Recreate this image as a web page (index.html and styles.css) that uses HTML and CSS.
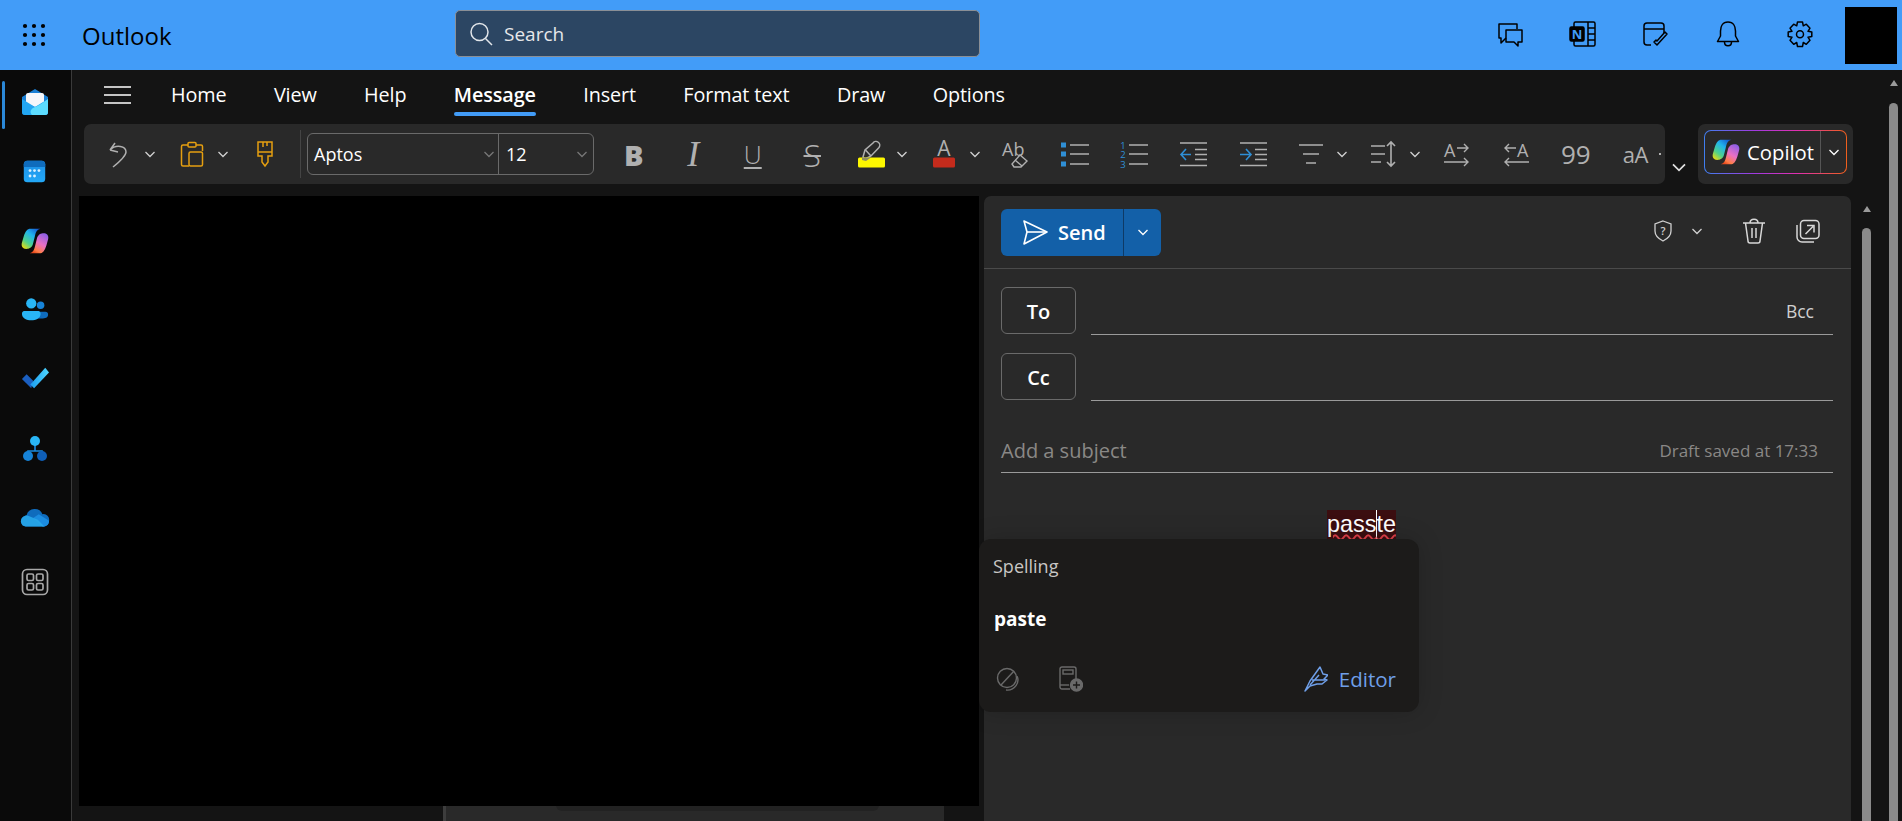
FILE: index.html
```html
<!DOCTYPE html>
<html lang="en">
<head>
<meta charset="utf-8">
<title>Outlook</title>
<link rel="stylesheet" href="styles.css">
</head>
<body>
<svg class="defs" width="0" height="0" aria-hidden="true">
  <defs>
    <linearGradient id="gCyan" x1="0" y1="0" x2="1" y2="0"><stop offset="0" stop-color="#1c9cf0"/><stop offset="1" stop-color="#4fd8ff"/></linearGradient>
    <linearGradient id="gCalendar" x1="0" y1="0" x2="0" y2="1"><stop offset="0" stop-color="#1d8fe6"/><stop offset="1" stop-color="#23a8f7"/></linearGradient>
    <linearGradient id="gCoA" x1="0.85" y1="0" x2="0.1" y2="1"><stop offset="0" stop-color="#1458d0"/><stop offset="0.35" stop-color="#20b4ec"/><stop offset="0.7" stop-color="#4fd28a"/><stop offset="1" stop-color="#f5dc0a"/></linearGradient>
    <linearGradient id="gCoB" x1="0.8" y1="0" x2="0.25" y2="1"><stop offset="0" stop-color="#8a5ee6"/><stop offset="0.5" stop-color="#ea70c4"/><stop offset="0.85" stop-color="#ff7d45"/><stop offset="1" stop-color="#e8481c"/></linearGradient>
    <symbol id="chev" viewBox="0 0 12 12"><polyline points="1.500,4 6,8.500 10.500,4" fill="none" stroke="currentColor" stroke-width="1.300"/></symbol>
    <symbol id="copilot" viewBox="0 0 32 32">
      <path fill="url(#gCoA)" d="M11 2H22C18 3 17 6 16 10L14 18C13 24 9 25 6 25C2 25 0 22 1 18L3 11C5 5 7 2 11 2Z"/>
      <path fill="url(#gCoB)" d="M21 30H10C14 29 15 26 16 22L18 14C19 8 23 7 26 7C30 7 32 10 31 14L29 21C27 27 25 30 21 30Z"/>
    </symbol>
  </defs>
</svg>
<div class="app">
  <header class="topbar">
    <svg class="waffle" width="24" height="24" viewBox="0 0 24 24" fill="#000"><circle cx="3" cy="3" r="2.100"/><circle cx="12" cy="3" r="2.100"/><circle cx="21" cy="3" r="2.100"/><circle cx="3" cy="12" r="2.100"/><circle cx="12" cy="12" r="2.100"/><circle cx="21" cy="12" r="2.100"/><circle cx="3" cy="21" r="2.100"/><circle cx="12" cy="21" r="2.100"/><circle cx="21" cy="21" r="2.100"/></svg>
    <div class="brand">Outlook</div>
    <div class="search">
      <svg width="26" height="26" viewBox="0 0 26 26" fill="none" stroke="#e2e6ea" stroke-width="1.500"><circle cx="11.500" cy="11" r="8.500"/><path d="M17.500 17.500L24 24"/></svg>
      <span>Search</span>
    </div>
    <div class="top-actions">
      <svg class="top-ic" viewBox="0 0 28 28" fill="none" stroke="#000" stroke-width="1.500" stroke-linejoin="round"><path d="M21 9V4H3V18H5V23L10 18"/><path d="M10 10H26V22H22V26L18 22H10Z"/></svg>
      <svg class="top-ic" viewBox="0 0 28 28" fill="none" stroke="#000" stroke-width="1.500"><rect x="5" y="2" width="21" height="24" rx="1.500"/><path d="M19 2V26M19 8H26M19 14H26M19 20H26"/><rect x="1" y="7" width="14" height="14" rx="1.500" fill="#000"/><text class="onenote" x="8" y="18.500" text-anchor="middle">N</text></svg>
      <svg class="top-ic" viewBox="0 0 28 28" fill="none" stroke="#000" stroke-width="1.500" stroke-linejoin="round"><path d="M10 25H6A3 3 0 0 1 3 22V6A3 3 0 0 1 6 3H20A3 3 0 0 1 23 6V13"/><path d="M3 9H23"/><path d="M13 22L16 25L26 14L24 12L16 21L15 20Z"/></svg>
      <svg class="top-ic" viewBox="0 0 28 28" fill="none" stroke="#000" stroke-width="1.500" stroke-linejoin="round"><path d="M14 2C8.500 2 6.500 6.500 6.500 11V16L3.500 21.500H24.500L21.500 16V11C21.500 6.500 19.500 2 14 2Z"/><path d="M10.500 22C10.500 27 17.500 27 17.500 22"/></svg>
      <svg class="top-ic" viewBox="0 0 28 28" fill="none" stroke="#000" stroke-width="1.500" stroke-linejoin="round"><path d="M11.500 2H16.500L17.300 5.800L20.300 4.200L24 8.200L22 11.300L25.800 12V16.500L22 17.200L24 20.300L20.300 24.300L17.300 22.500L16.500 26.500H11.500L10.700 22.500L7.700 24.300L4 20.300L6 17.200L2.200 16.500V12L6 11.300L4 8.200L7.700 4.200L10.700 5.800Z"/><circle cx="14" cy="14.200" r="3.500"/></svg>
    </div>
    <div class="avatar"></div>
  </header>

  <div class="body">
    <nav class="rail">
      <div class="rail-item rail-active">
        <svg class="rail-ic" viewBox="0 0 28 28"><path fill="#1a7fd4" d="M14 1L27 9V24A3 3 0 0 1 24 27H4A3 3 0 0 1 1 24V9Z"/><path fill="#f4f6fa" d="M5 7A2 2 0 0 1 7 5H21A2 2 0 0 1 23 7V15L14 19L5 15Z"/><path fill="#22a6f2" d="M1 11L14 19L27 11V24A3 3 0 0 1 24 27H4A3 3 0 0 1 1 24Z"/><path fill="#5cdcff" d="M27 11V24A3 3 0 0 1 24 27H11C9 25 9 22 12 20C17 18 22 15 27 11Z"/></svg>
      </div>
      <div class="rail-item">
        <svg class="rail-ic cal" viewBox="0 0 28 28"><rect x="2" y="2" width="24" height="24" rx="4" fill="url(#gCalendar)"/><path fill="#0f6cbd" d="M2 9V6A4 4 0 0 1 6 2H22A4 4 0 0 1 26 6V9Z"/><g fill="#d8f0ff"><circle cx="9" cy="13" r="1.600"/><circle cx="14" cy="13" r="1.600"/><circle cx="19" cy="13" r="1.600"/><circle cx="9" cy="19" r="1.600"/><circle cx="14" cy="19" r="1.600"/></g></svg>
      </div>
      <div class="rail-item"><svg class="rail-ic"><use href="#copilot"/></svg></div>
      <div class="rail-item">
        <svg class="rail-ic" viewBox="0 0 30 28"><circle cx="21" cy="9" r="4" fill="#1683d8"/><path fill="#0f6cbd" d="M16 16H26A3 3 0 0 1 29 19C29 22 26 23 22 23H14Z"/><circle cx="11" cy="7" r="5.500" fill="#29b6f6"/><path fill="#29b6f6" d="M3 15H19A3 3 0 0 1 21 18C21 23 16 25 11 25C6 25 1 23 1 18A3 3 0 0 1 3 15Z"/></svg>
      </div>
      <div class="rail-item">
        <svg class="rail-ic lift" viewBox="0 0 30 28"><path fill="#1b5fc0" d="M1 15L6 10L13 17L11 25Z"/><path fill="url(#gCyan)" d="M10 21L26 3L30 8L14 25Z"/></svg>
      </div>
      <div class="rail-item">
        <svg class="rail-ic" viewBox="0 0 28 28"><path d="M14 10V16M7 20V16H21V20" fill="none" stroke="#1a8ae0" stroke-width="1.600"/><circle cx="14" cy="6" r="5" fill="#29b6f6"/><circle cx="7" cy="21" r="5" fill="#1683d8"/><circle cx="21" cy="21" r="5" fill="#0f5fb8"/></svg>
      </div>
      <div class="rail-item">
        <svg class="rail-ic wide lift" viewBox="0 0 32 22"><path fill="#0f6cbd" d="M7 9A9 9 0 0 1 24 8A6 6 0 0 1 31 15C31 19 28 21 26 21H6C3 21 1 18.500 1 15.500C1 12 4 9.500 7 9Z"/><path fill="#1b8ce0" d="M14 12L20 8L31 15C31 19 28 21 26 21H10L24 21Z"/><path fill="#28a8ea" d="M3 20C1.500 18 1 17 1 15.500C1 12 4 9.500 8 9.500L19 14L26 21H6Z" opacity=".9"/></svg>
      </div>
      <div class="rail-item">
        <svg class="rail-ic" viewBox="0 0 28 28" fill="none" stroke="#a8a8a8" stroke-width="1.700"><rect x="1.500" y="1.500" width="25" height="25" rx="4.500"/><rect x="6" y="6" width="6.500" height="6.500" rx="1.500"/><rect x="15.500" y="6" width="6.500" height="6.500" rx="1.500"/><rect x="6" y="15.500" width="6.500" height="6.500" rx="1.500"/><rect x="15.500" y="15.500" width="6.500" height="6.500" rx="1.500"/></svg>
      </div>
    </nav>

    <main class="main">
      <div class="tabs">
        <svg class="menu" width="27" height="20" viewBox="0 0 27 20" stroke="#fff" stroke-width="1.600"><path d="M0 2H27M0 10H27M0 18H27"/></svg>
        <span class="tab">Home</span>
        <span class="tab">View</span>
        <span class="tab">Help</span>
        <span class="tab tab-on">Message</span>
        <span class="tab">Insert</span>
        <span class="tab">Format text</span>
        <span class="tab">Draw</span>
        <span class="tab">Options</span>
      </div>

      <div class="ribbon">
        <div class="toolbar">
          <div class="split">
            <svg class="i" viewBox="0 0 28 28" fill="none" stroke="#b0b0b0" stroke-width="1.500"><path d="M5 10L10 3M5 10L13 12M5 10C11 4 21 6 21 12C21 16 13 23 8 27"/></svg>
            <svg class="c"><use href="#chev"/></svg>
          </div>
          <div class="split">
            <svg class="i" viewBox="0 0 28 28" fill="none" stroke="#e59f10" stroke-width="1.500"><path d="M10 5H5A1.500 1.500 0 0 0 3.500 6.500V24.500A1.500 1.500 0 0 0 5 26H11M18 5H23A1.500 1.500 0 0 1 24.500 6.500V11"/><rect x="10" y="2.500" width="8" height="4.500" rx="1"/><rect x="11" y="12" width="13.500" height="14" rx="1.500"/></svg>
            <svg class="c"><use href="#chev"/></svg>
          </div>
          <div class="btn">
            <svg class="i" viewBox="0 0 28 28" fill="none" stroke="#e59f10" stroke-width="1.500"><path d="M7 2H21V16H17V22L14 26L11 22V16H7Z"/><path d="M7 12H21M12 2V7M16 2V6"/></svg>
          </div>
          <div class="sep"></div>
          <div class="fontbox">
            <div class="font-name"><span>Aptos</span><svg class="c dim"><use href="#chev"/></svg></div>
            <div class="font-size"><span>12</span><svg class="c dim"><use href="#chev"/></svg></div>
          </div>
          <div class="btn"><span class="g g-b">B</span></div>
          <div class="btn"><span class="g g-i">I</span></div>
          <div class="btn"><span class="g g-u">U</span></div>
          <div class="btn"><span class="g g-s">S</span></div>
          <div class="split split-tight">
            <svg class="i" viewBox="0 0 28 28" fill="none" stroke="#b0b0b0" stroke-width="1.500"><path d="M6 17L8 10L16 3A3 3 0 0 1 22 7.500L14 16L8 19Z"/><path d="M8.500 10L14 16"/><rect x="1" y="17.500" width="27" height="10" rx="1.500" fill="#fdf700" stroke="none"/><path d="M5 17.500H14L9 21L5 20Z" fill="#8c8c60" stroke="none"/></svg>
            <svg class="c"><use href="#chev"/></svg>
          </div>
          <div class="split">
            <svg class="i" viewBox="0 0 28 28"><text class="glyph-a" x="14" y="15.500" text-anchor="middle">A</text><rect x="3" y="17.500" width="22" height="10" rx="1.500" fill="#c42b1c"/></svg>
            <svg class="c"><use href="#chev"/></svg>
          </div>
          <div class="btn btn-clear">
            <svg class="i" viewBox="0 0 28 28" fill="none" stroke="#b0b0b0" stroke-width="1.400"><text class="glyph-ab" x="0" y="16">Ab</text><path d="M19 27H12L10 24L18 15L25 21L19 27Z" fill="#292929"/><path d="M13 20L20 26"/></svg>
          </div>
          <div class="btn">
            <svg class="i" viewBox="0 0 28 28" fill="none" stroke="#b0b0b0" stroke-width="1.600"><path d="M9 5H28M9 14H28M9 24H28"/><g fill="#2f8fd6" stroke="none"><rect x="0" y="2.500" width="5" height="5"/><rect x="0" y="11.500" width="5" height="5"/><rect x="0" y="21.500" width="5" height="5"/></g></svg>
          </div>
          <div class="btn">
            <svg class="i" viewBox="0 0 28 28" fill="none" stroke="#b0b0b0" stroke-width="1.600"><path d="M9 5H28M9 14H28M9 24H28"/><text class="glyph-n" x="3" y="8.500" text-anchor="middle">1</text><text class="glyph-n" x="3" y="18" text-anchor="middle">2</text><text class="glyph-n" x="3" y="27.500" text-anchor="middle">3</text></svg>
          </div>
          <div class="btn">
            <svg class="i" viewBox="0 0 28 28" fill="none" stroke="#b0b0b0" stroke-width="1.600"><path d="M0 3H27M15 9.500H27M15 14.500H27M15 19.500H27M0 25.500H27"/><path d="M11 14.500H1M6 9L1 14.500L6 20" stroke="#2f8fd6"/></svg>
          </div>
          <div class="btn">
            <svg class="i" viewBox="0 0 28 28" fill="none" stroke="#b0b0b0" stroke-width="1.600"><path d="M1 3H28M16 9.500H28M16 14.500H28M16 19.500H28M1 25.500H28"/><path d="M1 14.500H12M7 9L12 14.500L7 20" stroke="#2f8fd6"/></svg>
          </div>
          <div class="split split-tight2">
            <svg class="i" viewBox="0 0 28 28" fill="none" stroke="#b0b0b0" stroke-width="1.600"><path d="M2 5H26M6 14H22M9 23H19"/></svg>
            <svg class="c"><use href="#chev"/></svg>
          </div>
          <div class="split">
            <svg class="i" viewBox="0 0 28 28" fill="none" stroke="#b0b0b0" stroke-width="1.600"><path d="M1 6H15M1 14H15M1 22H11"/><path d="M21 2V26M17 6L21 2L25 6M17 22L21 26L25 22"/></svg>
            <svg class="c"><use href="#chev"/></svg>
          </div>
          <div class="btn">
            <svg class="i" viewBox="0 0 28 28" fill="none" stroke="#b0b0b0" stroke-width="1.400"><text class="glyph-d" x="1" y="17">A</text><path d="M14 8H25M21 4L25 8L21 12M1 22H25M21 18L25 22L21 26"/></svg>
          </div>
          <div class="btn">
            <svg class="i" viewBox="0 0 28 28" fill="none" stroke="#b0b0b0" stroke-width="1.400"><text class="glyph-d" x="15" y="17">A</text><path d="M14 8H3M7 4L3 8L7 12M27 22H3M7 18L3 22L7 26"/></svg>
          </div>
          <div class="btn"><span class="g g-q">99</span></div>
          <div class="btn"><span class="g g-aa">aA</span></div>
          <div class="dot"></div>
        </div>
        <svg class="more"><use href="#chev"/></svg>
        <div class="copilot-wrap">
          <div class="copilot">
            <div class="copilot-main"><svg class="co-logo"><use href="#copilot"/></svg><span>Copilot</span></div>
            <div class="copilot-drop"><svg class="c bright"><use href="#chev"/></svg></div>
          </div>
        </div>
      </div>

      <div class="content">
        <div class="left">
          <div class="under"><div class="notch"></div></div>
          <div class="redact"></div>
        </div>
        <section class="card">
          <div class="card-head">
            <div class="send">
              <div class="send-main">
                <svg width="26" height="26" viewBox="0 0 26 26" fill="none" stroke="#fff" stroke-width="1.600" stroke-linejoin="round"><path d="M2 2L25 13L2 25L5 13Z"/><path d="M5 13H25"/></svg>
                <span>Send</span>
              </div>
              <div class="send-drop"><svg class="c white"><use href="#chev"/></svg></div>
            </div>
            <div class="head-actions">
              <svg class="shield" viewBox="0 0 20 22" fill="none" stroke="#d0d0d0" stroke-width="1.300"><path d="M10 1L18 4V11C18 16 14 19 10 21C6 19 2 16 2 11V4Z"/><text class="q" x="10" y="15" text-anchor="middle">?</text></svg>
              <svg class="c shield-c"><use href="#chev"/></svg>
              <svg class="trash" viewBox="0 0 24 26" fill="none" stroke="#d8d8d8" stroke-width="1.500" stroke-linejoin="round"><path d="M1 5H23M8 5C8 0 16 0 16 5M3.500 5L6 23A2 2 0 0 0 8 25H16A2 2 0 0 0 18 23L20.500 5"/><path d="M10 10V20M14 10V20"/></svg>
              <svg class="pop" viewBox="0 0 24 24" fill="none" stroke="#d8d8d8" stroke-width="1.500"><rect x="4.500" y="1.500" width="18.500" height="18" rx="3.500"/><path d="M1 6V18A5 5 0 0 0 6 23H18"/><path d="M9.500 15L17 7.500M11 6.500H18V13.500"/></svg>
            </div>
          </div>
          <div class="fields">
            <div class="row">
              <div class="who">To</div>
              <div class="line"><span class="bcc">Bcc</span></div>
            </div>
            <div class="row">
              <div class="who">Cc</div>
              <div class="line"></div>
            </div>
            <div class="subject"><span class="subject-ph">Add a subject</span><span class="draft">Draft saved at 17:33</span></div>
            <div class="msg"><span class="miss">pass<i class="caret"></i>te</span></div>
          </div>
        </section>
      </div>
    </main>
  </div>

  <div class="popup">
    <div class="pop-title">Spelling</div>
    <div class="pop-word">paste</div>
    <div class="pop-foot">
      <svg width="24" height="24" viewBox="0 0 24 24" fill="none" stroke="#6a6a6a" stroke-width="1.400"><circle cx="11" cy="11" r="9.500"/><path d="M5 18L18 4"/><path d="M21 9C24 15 19 24 10 23"/></svg>
      <svg class="dict" width="24" height="26" viewBox="0 0 24 26" fill="none" stroke="#6a6a6a" stroke-width="1.400"><path d="M11 23H3A2 2 0 0 1 1 21V3A2 2 0 0 1 3 1H15A2 2 0 0 1 17 3V13"/><rect x="4" y="4" width="10" height="4"/><path d="M1 19H10"/><circle cx="17.500" cy="19" r="6" fill="#6a6a6a"/><path d="M17.500 15.500V22.500M14 19H21" stroke="#1c1b1a"/></svg>
      <div class="editor">
        <svg width="24" height="26" viewBox="0 0 24 26" fill="none" stroke="#6f9fe8" stroke-width="1.500" stroke-linejoin="round"><path d="M1 25L6 15L16 1L19 8L24 9L20 13L23 14L18 18H13L6 20Z"/><path d="M8 14H21M6 19L15 9"/></svg>
        <span>Editor</span>
      </div>
    </div>
  </div>

  <div class="scroll-outer"><div class="arrow"></div><div class="thumb"></div></div>
  <div class="scroll-inner"><div class="arrow"></div><div class="thumb"></div></div>
</div>
</body>
</html>
```

FILE: styles.css
```css
* { box-sizing: border-box; }
html, body { margin: 0; padding: 0; height: 100%; overflow: hidden; background: #141414; }
body { font-family: "Open Sans", "Noto Sans", sans-serif; color: #fff; }
.defs { position: absolute; }
.app { position: relative; width: 1902px; height: 821px; overflow: hidden; }

.topbar { height: 70px; background: #429cf8; display: flex; align-items: center; position: relative; }
.waffle { margin-left: 22px; flex: none; }
.brand { margin-left: 36px; width: 373px; font-size: 24px; font-weight: 500; color: #000; }
.search { width: 525px; height: 47px; margin-top: -3px; background: #2c4663; border: 1px solid #8a8f96; border-radius: 5px; display: flex; align-items: center; padding-left: 12px; gap: 10px; color: #e6e8ea; font-size: 19px; }
.top-actions { margin-left: 516px; display: flex; gap: 44.500px; }
.top-ic { width: 28px; height: 28px; flex: none; margin-top: -2px; }
.onenote { font: 700 13px "Open Sans", sans-serif; fill: #429cf8; stroke: none; }
.avatar { margin-left: 31px; width: 52px; height: 57px; background: #000; margin-top: 1px; }

.body { display: flex; height: 751px; }
.rail { width: 72px; flex: none; background: #0a0a0a; border-right: 1px solid #3a3a3a; position: relative; }
.rail-item { height: 69.500px; display: flex; align-items: center; justify-content: center; padding-right: 2px; }
.rail-item:first-child { margin-top: -3px; }
.rail-item:last-child { margin-top: -6px; }
.rail-active::before { content: ""; position: absolute; left: 2px; top: 11px; width: 3px; height: 48px; border-radius: 2px; background: #2b88d8; }
.rail-ic { width: 28px; height: 28px; }
.rail-ic.wide { width: 30px; height: 22px; }
.rail-ic.cal { width: 25px; height: 25px; }
.rail-ic.lift { margin-bottom: 4px; }

.main { flex: 1; min-width: 0; padding-left: 12px; display: flex; flex-direction: column; }
.tabs { height: 54px; display: flex; align-items: flex-start; padding-left: 20px; }
.menu { margin: 15px 16.300px 0 0; flex: none; }
.tab { height: 46px; padding: 3px 23.700px 0; display: flex; align-items: center; font-size: 19.800px; letter-spacing: -0.100px; position: relative; }
.tab-on { font-weight: 600; }
.tab-on::after { content: ""; position: absolute; left: 23.700px; right: 23.700px; bottom: 0; height: 4px; border-radius: 2px; background: #429cf8; }

.ribbon { height: 60px; display: flex; position: relative; }
.toolbar { width: 1581px; height: 60px; background: #292929; border-radius: 7px; display: flex; align-items: center; padding-left: 5px; }
.btn { width: 59.500px; flex: none; display: flex; justify-content: center; align-items: center; }
.btn-clear { width: 58px; }
.split { width: 73px; flex: none; padding-left: 18px; display: flex; align-items: center; gap: 13px; }
.split-tight { width: 72px; padding-left: 17px; }
.split-tight2 { width: 71px; padding-left: 16px; }
.i { width: 28px; height: 28px; flex: none; overflow: visible; }
.split .i { margin: 0 -2px; }
.c { width: 12px; height: 12px; flex: none; color: #d0d0d0; }
.c.dim { color: #777; }
.c.bright, .c.white { color: #fff; }
.sep { width: 1px; height: 48px; background: #444; margin: 0 6px 0 5.500px; flex: none; }
.fontbox { width: 287px; height: 42px; flex: none; border: 1px solid #6a6a6a; border-radius: 6px; display: flex; margin-right: 10px; font-size: 18px; }
.font-name { width: 191px; border-right: 1px solid #6a6a6a; display: flex; align-items: center; justify-content: space-between; padding: 0 3px 0 6px; }
.font-size { flex: 1; display: flex; align-items: center; justify-content: space-between; padding: 0 5px 0 7px; }
.g { color: #b0b0b0; line-height: 28px; display: block; text-align: center; }
.g-b { font: 800 29px "Open Sans", sans-serif; }
.g-i { font: italic 400 36px "Liberation Serif", serif; }
.g-u { font: 300 25px "Open Sans", sans-serif; text-decoration: underline; text-decoration-thickness: 1.500px; text-underline-offset: 3px; }
.g-s { font: 300 32px "Open Sans", sans-serif; text-decoration: line-through; text-decoration-thickness: 1.500px; }
.g-q { font: 400 26px "Open Sans", sans-serif; }
.g-aa { font: 400 22px "Open Sans", sans-serif; letter-spacing: -0.500px; }
.glyph-a { font: 400 21px "Open Sans", sans-serif; fill: #b0b0b0; stroke: none; }
.glyph-ab { font: 400 18px "Open Sans", sans-serif; fill: #b0b0b0; stroke: none; }
.glyph-n { font: 400 9.500px "Open Sans", sans-serif; fill: #2f8fd6; stroke: none; }
.glyph-d { font: 400 18px "Open Sans", sans-serif; fill: #b0b0b0; stroke: none; }
.dot { width: 2px; height: 2px; background: #b0b0b0; margin-left: -6px; flex: none; }
.more { width: 16px; height: 16px; flex: none; color: #e0e0e0; margin: 35px 11px 0 6px; }
.copilot-wrap { width: 155px; height: 60px; flex: none; background: #292929; border-radius: 7px; padding: 6px 6px 10px 6px; }
.copilot { height: 44px; border: 1px solid transparent; border-radius: 7px; display: flex; background: linear-gradient(#292929, #292929) padding-box, linear-gradient(90deg, #3f7ff0 0%, #a03ae0 35%, #e02fb0 65%, #f0601c 100%) border-box; }
.copilot-main { width: 116px; display: flex; align-items: center; padding-left: 7px; gap: 7px; font-size: 20.300px; border-right: 1px solid #555; }
.co-logo { width: 28px; height: 28px; flex: none; }
.copilot-drop { flex: 1; display: flex; align-items: center; justify-content: center; }

.content { flex: 1; display: flex; margin-top: 12px; min-height: 0; }
.left { width: 912px; flex: none; position: relative; margin-left: -12px; }
.under { margin-left: 371px; width: 501px; height: 100%; background: #292929; border-left: 3px solid #3d3d3d; position: relative; }
.notch { position: absolute; left: 110px; bottom: 10px; width: 323px; height: 10px; background: #222; border-radius: 0 0 6px 6px; }
.redact { position: absolute; left: 7px; top: 0; width: 900px; bottom: 15px; background: #000; }

.card { width: 867px; flex: none; background: #292929; border-radius: 7px 7px 0 0; }
.card-head { height: 73px; border-bottom: 1px solid #4a4a4a; display: flex; align-items: center; justify-content: space-between; padding: 0 31px 0 17px; }
.send { width: 160px; height: 47px; background: #1360a8; border-radius: 6px; display: flex; }
.send-main { width: 123px; display: flex; align-items: center; padding-left: 21px; gap: 10px; font-size: 20px; font-weight: 600; border-right: 1px solid #0e3a66; }
.send-drop { flex: 1; display: flex; align-items: center; justify-content: center; }
.head-actions { display: flex; align-items: center; margin-top: -2px; }
.shield { width: 20px; height: 22px; }
.q { font: 600 11px "Open Sans", sans-serif; fill: #d0d0d0; stroke: none; }
.shield-c { margin-left: 18px; }
.trash { width: 24px; height: 26px; margin-left: 39px; }
.pop { width: 24px; height: 24px; margin-left: 30px; }
.fields { padding: 18px 18px 0 17px; }
.row { display: flex; height: 47px; gap: 15px; margin-bottom: 19px; }
.who { width: 75px; flex: none; border: 1px solid #6a6a6a; border-radius: 6px; display: flex; align-items: center; justify-content: center; font-size: 20px; font-weight: 600; padding-top: 1px; }
.line { flex: 1; height: 48px; border-bottom: 1px solid #9a9a9a; display: flex; justify-content: flex-end; align-items: flex-end; padding: 0 19px 11px 0; }
.bcc { font-size: 17.500px; color: #d0d0d0; }
.subject { margin-top: 30px; height: 43px; border-bottom: 1px solid #9a9a9a; display: flex; justify-content: space-between; align-items: center; }
.subject-ph { font-size: 20px; color: #8a8886; margin-top: -2px; }
.draft { font-size: 17px; color: #8a8886; margin: -2px 15px 0 0; }
.msg { margin-top: 37px; padding-left: 326px; }
.miss { display: inline-block; height: 30px; background: #3b0e10; font: 23.400px/29px "Liberation Sans", sans-serif; color: #fff; text-decoration: underline wavy #e04048; text-decoration-thickness: 2px; text-underline-offset: 2px; }
.caret { display: inline-block; width: 1px; height: 30px; background: #fff; margin-right: -1px; vertical-align: top; }

.popup { position: absolute; left: 979px; top: 539px; width: 440px; height: 173px; background: #1c1b1a; border-radius: 12px; padding: 15px 19px 0 14px; box-shadow: 0 0 24px rgba(0,0,0,.18); }
.pop-title { font-size: 18px; color: #c8c6c4; font-weight: 500; line-height: 24px; }
.pop-word { margin-top: 29px; font-size: 19px; font-weight: 700; line-height: 24px; padding-left: 1px; }
.pop-foot { margin-top: 34px; display: flex; align-items: center; padding-left: 3px; }
.dict { margin-left: 39px; }
.editor { margin-left: auto; display: flex; align-items: center; gap: 11px; color: #6f9fe8; font-size: 20.500px; font-weight: 500; margin-right: 4px; }

.scroll-outer, .scroll-inner { position: absolute; bottom: 0; width: 9px; }
.scroll-outer { left: 1889px; top: 80px; }
.scroll-inner { left: 1862px; top: 206px; }
.arrow { width: 0; height: 0; margin: 0 auto; border-left: 4.500px solid transparent; border-right: 4.500px solid transparent; border-bottom: 6px solid #9a9a9a; }
.thumb { position: absolute; left: 0; right: 0; bottom: 0; background: #8a8a8a; border-radius: 5px 5px 0 0; }
.scroll-outer .thumb { top: 23px; }
.scroll-inner .thumb { top: 22px; }
```
